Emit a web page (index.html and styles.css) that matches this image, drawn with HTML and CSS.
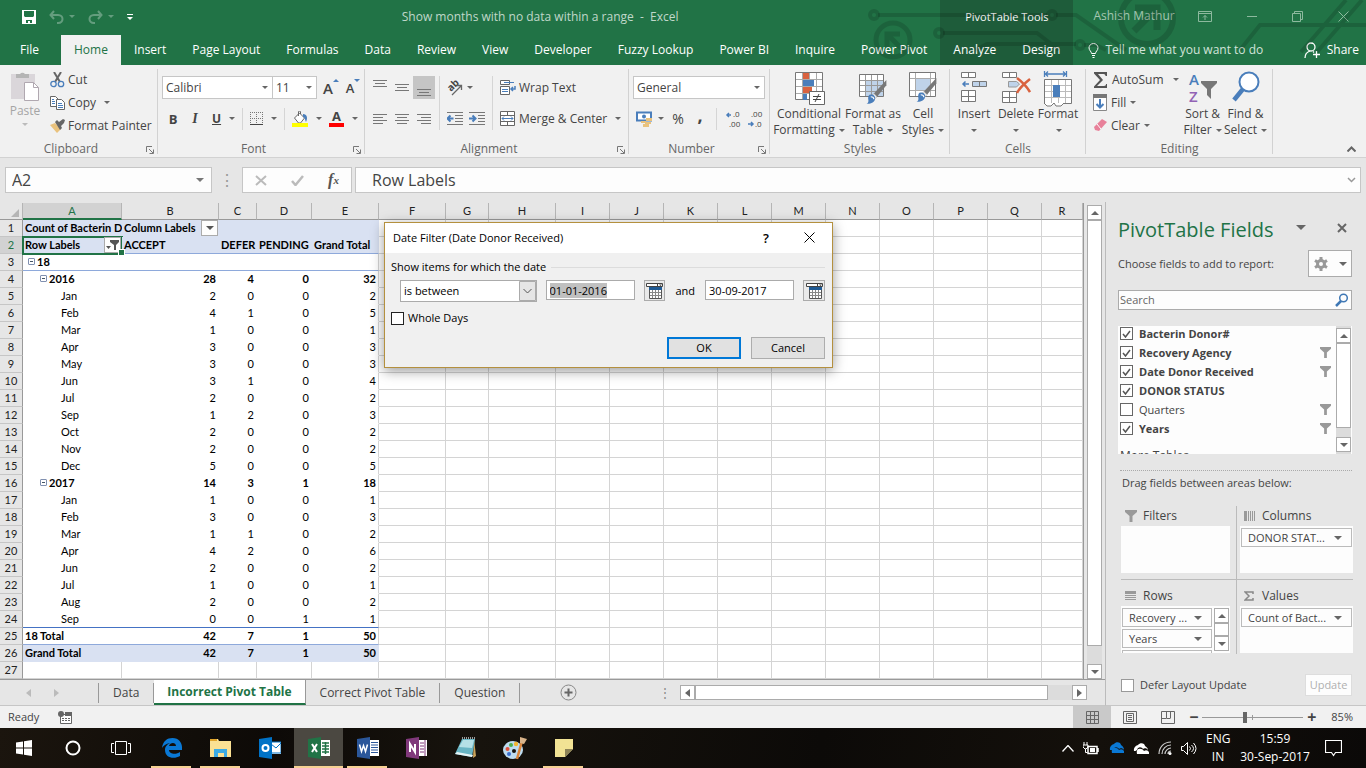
FILE: index.html
```html
<!DOCTYPE html>
<html lang="en">
<head>
<meta charset="utf-8">
<meta name="viewport" content="width=device-width,initial-scale=1">
<title>Show months with no data within a range - Excel</title>
<link rel="stylesheet" href="styles.css">
</head>
<body>

<!-- shared icons -->
<svg class="sprite" aria-hidden="true">
  <symbol id="i-launch" viewBox="0 0 8 8"><path d="M.5 6V.5H6M3 3l4 4M7.500 3.500v4h-4" fill="none" stroke="#777"/></symbol>
  <symbol id="i-funnel" viewBox="0 0 12 12"><path d="M0 0h12v2L7.500 6v6h-3V6L0 2z"/></symbol>
  <symbol id="i-up" viewBox="0 0 8 4"><path d="M0 4l4-4 4 4z"/></symbol>
  <symbol id="i-down" viewBox="0 0 8 4"><path d="M0 0h8L4 4z"/></symbol>
  <symbol id="i-cal" viewBox="0 0 17 16">
    <path d="M.5.5h16v3H.5z" fill="#fff" stroke="#444"/><path d="M11 1h1v2h-1zM13 1.500h3l-1.500 1.500z" fill="#444"/>
    <path d="M3.500 4.500h12v11h-12z" fill="#fff" stroke="#555"/><path d="M3 4h13v3H3z" fill="#1f5a94"/>
    <path d="M6.500 7v8M9.500 7v8M12.500 7v8M4 9.500h11M4 12.500h11" stroke="#888"/>
  </symbol>
  <symbol id="i-brush" viewBox="0 0 20 24">
    <path d="M19 0v5L10 16l-3-3z" fill="#777"/><path d="M7 13l3 3-2 2-3-3z" fill="#eee" stroke="#999" stroke-width=".5"/>
    <path d="M4 14c3 0 5 2 4 5-1 3-5 4-8 4 2-1 2-3 1.500-5C1.500 16 2 14 4 14z" fill="#4a7ebb"/><path d="M4 16c2 0 3 1 3 2.500" fill="none" stroke="#fff"/>
  </symbol>
</svg>

<!-- TITLE BAR + TABS -->
<header class="top">
  <svg class="circuit" viewBox="0 0 526 65" aria-hidden="true">
    <g fill="none" stroke="#000" stroke-opacity=".14" stroke-width="4">
      <circle cx="34" cy="15" r="4"/><path d="M38 15h169M216 15h20l50 35"/><circle cx="212" cy="15" r="4"/>
      <circle cx="53" cy="40" r="17" stroke-width="5"/><path d="M60 34H47v13M47 34l16 16" stroke-width="5"/>
      <circle cx="99" cy="33" r="4"/><path d="M103 33h94l22 17M135 50l12-6h89"/><circle cx="240" cy="45" r="4"/><path d="M244 45h12l10 5"/>
      <circle cx="307" cy="18" r="26" stroke-width="6"/><path d="M295 8h22v22M317 8l-23 23" stroke-width="7"/>
      <path d="M526 25H420l-20 25M506 0l-45 52M522 0l-45 52"/>
    </g>
  </svg>

  <div class="titlebar">
    <div class="qat">
      <button aria-label="Save"><svg width="14" height="14"><path d="M0 0h14v14H0zM2 1v5l1 1h8l1-1V1zM4 10v3h2v-2h2v2h2v-3z" fill="#fff" fill-rule="evenodd"/></svg></button>
      <button class="dim" aria-label="Undo"><svg width="15" height="14"><path d="M5 1L1.500 5 5 9M2 5h7c6 0 6 8 0 8H8" fill="none" stroke="#fff" stroke-width="2"/></svg><i class="caret"></i></button>
      <button class="dim" aria-label="Redo"><svg width="15" height="14"><path d="M10 1l3.500 4L10 9M13 5H6c-6 0-6 8 0 8h1" fill="none" stroke="#fff" stroke-width="2"/></svg><i class="caret"></i></button>
      <button aria-label="Customize Quick Access Toolbar"><svg width="6" height="6"><path d="M0 0h6v1H0zM0 3h6L3 6z" fill="#fff"/></svg></button>
    </div>
    <div class="doc-title">Show months with no data within a range &nbsp;-&nbsp; Excel</div>
  </div>
  <div class="context-title">PivotTable Tools</div>
  <div class="user">
    <span>Ashish Mathur</span>
    <div class="winbtns">
      <button aria-label="Ribbon Display Options"><svg width="14" height="11"><path d="M.5.5h13v10H.5zM1 2.500h12M7 9V4.500M5 6.500l2-2 2 2" fill="none" stroke="#8db99e"/></svg></button>
      <button aria-label="Minimize"><svg width="10" height="11"><path d="M0 5.500h10" stroke="#8db99e"/></svg></button>
      <button aria-label="Restore"><svg width="11" height="11"><path d="M.5 2.500h8v8h-8zM2.500 2V.5h8v8H9" fill="none" stroke="#8db99e"/></svg></button>
      <button aria-label="Close"><svg width="11" height="11"><path d="M.5.5l10 10M10.500.5l-10 10" stroke="#8db99e"/></svg></button>
    </div>
  </div>

  <nav class="tabs">
    <a href="#" class="file">File</a><a href="#" class="on">Home</a><a href="#">Insert</a><a href="#">Page Layout</a><a href="#">Formulas</a><a href="#">Data</a><a href="#">Review</a><a href="#">View</a><a href="#">Developer</a><a href="#">Fuzzy Lookup</a><a href="#">Power BI</a><a href="#">Inquire</a><a href="#">Power Pivot</a>
  </nav>
  <nav class="tabs context"><a href="#">Analyze</a><a href="#">Design</a></nav>
  <div class="tell">
    <button><svg width="11" height="15"><path d="M3.500 10.500C3.500 8.500 1 7.500 1 4.800a4.500 4.300 0 0 1 9 0c0 2.700-2.500 3.700-2.500 5.700zM4 12.500h3M4.500 14.500h2" fill="none" stroke="#fff"/></svg>Tell me what you want to do</button>
    <button class="share"><svg width="17" height="17"><circle cx="7" cy="5" r="4" fill="none" stroke="#fff" stroke-width="1.300"/><path d="M1 16c0-4 2-6 5-7M9 9.500l1 1M12.500 9v7M9 12.500h7" fill="none" stroke="#fff" stroke-width="1.300"/></svg>Share</button>
  </div>
</header>

<!-- RIBBON -->
<section class="ribbon">
  <div class="group g-clip">
    <div class="tools">
      <button class="paste"><svg width="30" height="32">
        <path d="M1 3h24v25H1z" fill="#dad6da"/><path d="M6 7V3h4a3 3 0 0 1 5 0h4v4z" fill="#b5b5b5"/>
        <path d="M14.500 11.500h9l5 5v13h-14z" fill="#fff" stroke="#b0a8b0"/><path d="M23.500 11.500v5h5" fill="none" stroke="#b0a8b0"/></svg>Paste<i class="caret"></i></button>
      <div class="stack">
        <button><svg width="15" height="16"><path d="M4 0l6 10M11 0L5 10" stroke="#666" stroke-width="2"/><circle cx="3.500" cy="12" r="2.700" fill="none" stroke="#4a7ebb" stroke-width="1.300"/><circle cx="11" cy="12" r="2.700" fill="none" stroke="#4a7ebb" stroke-width="1.300"/></svg>Cut</button>
        <button><svg width="15" height="14"><path d="M.5.5h5l3 3v7h-8z" fill="#fff" stroke="#666"/><path d="M6.500 3.500h5l3 3v7h-8z" fill="#fff" stroke="#666"/><path d="M2 3.500h2M2 5.500h3M2 7.500h3M8 7.500h4M8 9.500h5M8 11.500h5" stroke="#4a7ebb"/></svg>Copy<i class="caret wide"></i></button>
        <button><svg width="15" height="14"><path d="M0 6l5-2 6 6-4 4z" fill="#e9c27d"/><path d="M5 3l2-2 2 2 4-3 2 1-1 3-3 3 1 2-2 2z" fill="#666"/></svg>Format Painter</button>
      </div>
    </div>
    <div class="label">Clipboard<button aria-label="Clipboard settings"><svg><use href="#i-launch"/></svg></button></div>
  </div>

  <div class="group g-font">
    <div class="tools rows">
      <div class="row">
        <select class="combo font" aria-label="Font"><option>Calibri</option></select>
        <select class="combo size" aria-label="Font size"><option>11</option></select>
        <button class="sq grow" aria-label="Increase font size"><b>A</b><svg width="6" height="3" fill="#4a7ebb"><use href="#i-up"/></svg></button>
        <button class="sq shrink" aria-label="Decrease font size"><b>A</b><svg width="6" height="3" fill="#4a7ebb"><use href="#i-down"/></svg></button>
      </div>
      <div class="row">
        <button class="sq"><b>B</b></button><button class="sq"><i class="ital">I</i></button>
        <button class="sq under"><u>U</u><i class="caret"></i></button>
        <span class="sep"></span>
        <button class="sq" aria-label="Borders"><svg width="13" height="13"><path d="M.5 0v12M6.500 0v12M12.500 0v12M0 .5h13M0 6.500h13" stroke="#777" stroke-dasharray="1 1"/><path d="M0 12.500h13" stroke="#444"/></svg><i class="caret"></i></button>
        <span class="sep"></span>
        <button class="sq" aria-label="Fill colour"><svg width="16" height="16"><path d="M2.500 7l5-5 5 5-4 5h-2z" fill="#fff" stroke="#666"/><path d="M6.500 5V1a1 1 0 0 1 2 0v2" fill="none" stroke="#666"/><path d="M11 3c4 0 5 4 3 8-1-2-1-5-3-5z" fill="#4a7ebb"/><path d="M0 12h16v4H0z" fill="#ff0"/></svg><i class="caret"></i></button>
        <button class="sq fontcol" aria-label="Font colour"><b>A</b><i class="caret"></i></button>
      </div>
    </div>
    <div class="label">Font<button aria-label="Font settings"><svg><use href="#i-launch"/></svg></button></div>
  </div>

  <div class="group g-align">
    <div class="tools">
      <div class="pair">
        <div class="row">
          <button class="sq" aria-label="Top align"><svg class="ln"><path d="M0 1.500h14M2 4.500h10M0 7.500h14"/></svg></button>
          <button class="sq" aria-label="Middle align"><svg class="ln"><path d="M0 5.500h14M2 8.500h10M0 11.500h14"/></svg></button>
          <button class="sq on" aria-label="Bottom align"><svg class="ln"><path d="M0 10.500h14M2 13.500h10M0 16.500h14"/></svg></button>
        </div>
        <div class="row">
          <button class="sq" aria-label="Align left"><svg class="ln"><path d="M0 4.500h14M0 7.500h10M0 10.500h14M0 13.500h10"/></svg></button>
          <button class="sq" aria-label="Center"><svg class="ln"><path d="M0 4.500h14M2 7.500h10M0 10.500h14M2 13.500h10"/></svg></button>
          <button class="sq" aria-label="Align right"><svg class="ln"><path d="M0 4.500h14M4 7.500h10M0 10.500h14M4 13.500h10"/></svg></button>
        </div>
      </div>
      <span class="sep tall"></span>
      <div class="pair">
        <div class="row"><button class="sq" aria-label="Orientation"><svg class="orient" width="17" height="16"><text transform="translate(5 12) rotate(-45)">ab</text><path d="M6 15l9-9M11 5.500h4.500V10" fill="none" stroke="#666" stroke-width="1.300"/></svg><i class="caret"></i></button></div>
        <div class="row">
          <button class="sq" aria-label="Decrease indent"><svg width="16" height="14"><path d="M0 .5h16M8 3.500h8M8 6.500h8M8 9.500h8M0 12.500h16" stroke="#777"/><path d="M6.500 6.500H1M3.500 3.500l-3 3 3 3" fill="none" stroke="#4a7ebb" stroke-width="2"/></svg></button>
          <button class="sq" aria-label="Increase indent"><svg width="16" height="14"><path d="M0 .5h16M9 3.500h7M9 6.500h7M9 9.500h7M0 12.500h16" stroke="#777"/><path d="M0 6.500h5.500M3.500 3.500l3 3-3 3" fill="none" stroke="#4a7ebb" stroke-width="2"/></svg></button>
        </div>
      </div>
      <span class="sep tall"></span>
      <div class="pair">
        <div class="row"><button class="txt"><svg width="16" height="15"><path d="M.5.5h9v4h-9zM.5 6.500h9v8h-9z" fill="#fff" stroke="#666"/><path d="M4 2.500h10M2 9.500h6M2 11.500h6" stroke="#4a7ebb"/><path d="M15 6v3h-4M13 7l-2 2 2 2" fill="none" stroke="#4a7ebb" stroke-width="1.500"/></svg>Wrap Text</button></div>
        <div class="row"><button class="txt"><svg width="16" height="15"><path d="M.5.5h14v14H.5zM.5 4.500h14M.5 10.500h14M7.500 1v3M7.500 11v3" fill="#fff" stroke="#666"/><path d="M2 7.500h11M4 5.500l-2 2 2 2M11 5.500l2 2-2 2" fill="none" stroke="#4a7ebb"/></svg>Merge &amp; Center<i class="caret wide"></i></button></div>
      </div>
    </div>
    <div class="label">Alignment<button aria-label="Alignment settings"><svg><use href="#i-launch"/></svg></button></div>
  </div>

  <div class="group g-num">
    <div class="tools rows">
      <div class="row"><select class="combo numfmt" aria-label="Number format"><option>General</option></select></div>
      <div class="row spread">
        <button class="sq money" aria-label="Accounting format"><svg width="16" height="16"><path d="M1 1.500h14v8H1z" fill="#fff" stroke="#4a7ebb" stroke-width="2"/><circle cx="8" cy="5.500" r="2" fill="#4a7ebb"/><path d="M10 7h6v3h-6zM9 11h6v2H9zM5 10h5v2H5zM7 13h6v3H7z" fill="#e9c27d"/></svg><i class="caret"></i></button>
        <button class="sq pct">%</button><button class="sq comma"><b>,</b></button>
        <span class="sep"></span>
        <button class="sq" aria-label="Increase decimal"><svg width="17" height="20"><path d="M6 6H2M4 4L2 6l2 2" fill="none" stroke="#4a7ebb" stroke-width="1.500"/><text x="8" y="8">.0</text><text x="4" y="18">.00</text></svg></button>
        <button class="sq" aria-label="Decrease decimal"><svg width="17" height="20"><text x="4" y="8">.00</text><path d="M1 15h5M4 13l2 2-2 2" fill="none" stroke="#4a7ebb" stroke-width="1.500"/><text x="8" y="18">.0</text></svg></button>
      </div>
    </div>
    <div class="label">Number<button aria-label="Number settings"><svg><use href="#i-launch"/></svg></button></div>
  </div>

  <div class="group g-styles">
    <div class="tools">
      <button class="big w74"><svg width="32" height="34"><path d="M2.500 1.500h27v27h-27z" fill="#fff" stroke="#777"/><path d="M9.500 2v26M16.500 2v26M23.500 2v26M3 8.500h26M3 15.500h26M3 22.500h26" stroke="#aaa"/><path d="M10 2h6v6h-6zM10 16h9v6h-9z" fill="#d9623f"/><path d="M10 9h11v6H10zM10 23h4v6h-4z" fill="#4a7ebb"/><path d="M16.500 20.500h15v13h-15z" fill="#fff" stroke="#666"/><path d="M20 25.500h8M20 28.500h8M26 23l-4 8" stroke="#444"/></svg><span>Conditional<br>Formatting <i class="caret"></i></span></button>
      <button class="big w54"><svg width="32" height="34"><path d="M2.500 3.500h24v22h-24z" fill="#fff" stroke="#777"/><path d="M8 9h18v16H8z" fill="#bfd3ea"/><path d="M8.500 4v21M14.500 4v21M20.500 4v21M3 9.500h23M3 14.500h23M3 20.500h23" stroke="#999"/><use href="#i-brush" x="9" y="9" width="22" height="25"/></svg><span>Format as<br>Table <i class="caret"></i></span></button>
      <button class="big w46"><svg width="32" height="34"><path d="M2.500 1.500h26v24h-26z" fill="#fff" stroke="#777"/><path d="M8.500 2v23M23.500 2v23M3 7.500h25M3 19.500h25" stroke="#aaa"/><path d="M9 8h14v11H9z" fill="#bfd3ea"/><use href="#i-brush" x="9" y="7" width="22" height="25"/></svg><span>Cell<br>Styles <i class="caret"></i></span></button>
    </div>
    <div class="label">Styles</div>
  </div>

  <div class="group g-cells">
    <div class="tools">
      <button class="big w42"><svg width="28" height="34"><path d="M1.500 1.500h14v5h-14zM8.500 1.500v5M1.500 19.500h14v11h-14zM8.500 19.500v11M1.500 25.500h14" fill="#fff" stroke="#777"/><path d="M12.500 10.500h14v5h-14zM19.500 10.500v5" fill="#bfd3ea" stroke="#777"/><path d="M9 13H3M5.500 10.500L3 13l2.500 2.500" fill="none" stroke="#4a7ebb" stroke-width="1.500"/></svg><span>Insert<br><i class="caret"></i></span></button>
      <button class="big w42"><svg width="30" height="34"><path d="M1.500 1.500h14v5h-14zM8.500 1.500v5M1.500 20.500h14v11h-14zM8.500 20.500v11M1.500 26.500h14" fill="#fff" stroke="#777"/><path d="M7.500 10.500h8l3 2.500-3 3h-8z" fill="#bfd3ea" stroke="#999"/><path d="M16 7c4 3 10 9 13 14M29 8c-5 4-10 8-13 14" fill="none" stroke="#d9623f" stroke-width="2.500"/></svg><span>Delete<br><i class="caret"></i></span></button>
      <button class="big w42"><svg width="30" height="36"><path d="M1.500 0v6M23.500 0v6M2 3h21M5 .5L2.500 3 5 5.500M20 .5L22.500 3 20 5.500" fill="none" stroke="#4a7ebb" stroke-width="1.300"/><path d="M1.500 8.500h27v24h-27z" fill="#fff" stroke="#777"/><path d="M8.500 9v23M15.500 9v23M22.500 9v23M2 14.500h26M2 20.500h26M2 26.500h26" stroke="#bbb"/><path d="M10 14h7v12h-7z" fill="#4a7ebb"/><path d="M1 32l3 3h4l3-3 2 3h5l3-3" fill="#fff" stroke="#777"/></svg><span>Format<br><i class="caret"></i></span></button>
    </div>
    <div class="label">Cells</div>
  </div>

  <div class="group g-edit">
    <div class="tools">
      <div class="stack">
        <button><svg width="15" height="16"><path d="M1 0h13v4h-1.500c0-1-.5-2-2-2H5l5 6-6 6h7c1.500 0 2-1 2-2H14v4H1v-1.500L7 8 1 1.500z" fill="#555"/></svg>AutoSum<i class="caret wide"></i></button>
        <button><svg width="14" height="17"><path d="M.5.5h13v16H.5z" fill="#fff" stroke="#888"/><path d="M0 0h14v4H0z" fill="#777"/><path d="M7 5v8M3.500 10L7 13.500l3.500-3.500" fill="none" stroke="#4a7ebb" stroke-width="2"/></svg>Fill<i class="caret"></i></button>
        <button><svg width="14" height="15"><path d="M1 9l8-8 5 3-8 9-4-1z" fill="#e8819a"/><path d="M4 6l4 5" stroke="#fff"/></svg>Clear<i class="caret"></i></button>
      </div>
      <button class="big w43"><svg class="az" width="30" height="36"><text x="1" y="14" fill="#4a7ebb">A</text><text x="1" y="31" fill="#9263b5">Z</text><path d="M13 10h16v2l-6 6v10l-4-4v-6l-6-6z" fill="#777"/></svg><span>Sort &amp;<br>Filter <i class="caret"></i></span></button>
      <button class="big w43"><svg width="30" height="34"><path d="M12 18L3 29" stroke="#4a7ebb" stroke-width="4.500"/><circle cx="18" cy="11" r="9.500" fill="#fff" stroke="#4a7ebb" stroke-width="2"/></svg><span>Find &amp;<br>Select <i class="caret"></i></span></button>
    </div>
    <div class="label">Editing</div>
  </div>
  <button class="collapse" aria-label="Collapse the ribbon"><svg width="9" height="6"><path d="M.5 5.500l4-4 4 4" fill="none" stroke="#666" stroke-width="2"/></svg></button>
</section>

<!-- FORMULA BAR -->
<section class="formula">
  <div class="namebox"><input aria-label="Name Box" value="A2"><button aria-label="Names"><svg width="8" height="4" fill="#777"><use href="#i-down"/></svg></button></div>
  <span class="dots">⋮</span>
  <div class="fx">
    <button aria-label="Cancel entry"><svg width="12" height="11"><path d="M1 1l10 9M11 1L1 10" stroke="#bbb" stroke-width="2"/></svg></button>
    <button aria-label="Enter"><svg width="13" height="11"><path d="M1 6l3.500 4L12 1" fill="none" stroke="#bbb" stroke-width="2.500"/></svg></button>
    <button aria-label="Insert function" class="fxi">f<small>x</small></button>
  </div>
  <div class="entry"><input aria-label="Formula Bar" value="Row Labels"><button aria-label="Expand"><svg width="9" height="6"><path d="M1 1l3.500 3.500L8 1" fill="none" stroke="#999" stroke-width="1.500"/></svg></button></div>
</section>

<!-- SHEET + FIELD LIST -->
<main>
  <div class="book">
    <div class="view">
      <div class="grid"><table id="sheet"></table></div>
      <div class="vscroll">
        <button aria-label="Scroll up"><svg width="8" height="4"><use href="#i-up"/></svg></button>
        <div class="thumb"></div>
        <button aria-label="Scroll down"><svg width="8" height="4"><use href="#i-down"/></svg></button>
      </div>
    </div>
    <div class="sheettabs">
      <div class="arrows"><button aria-label="Previous sheet"><svg width="5" height="8"><path d="M5 0v8L0 4z"/></svg></button><button aria-label="Next sheet"><svg width="5" height="8"><path d="M0 0v8l5-4z"/></svg></button></div>
      <a href="#">Data</a><a href="#" class="on">Incorrect Pivot Table</a><a href="#">Correct Pivot Table</a><a href="#">Question</a>
      <button class="add" aria-label="New sheet"><svg width="17" height="17"><circle cx="8.500" cy="8.500" r="7.500" fill="none" stroke="#888"/><path d="M8.500 4.500v8M4.500 8.500h8" stroke="#666" stroke-width="2"/></svg></button>
      <span class="dots">⋮</span>
      <div class="hscroll">
        <button aria-label="Scroll left"><svg width="5" height="8"><path d="M5 0v8L0 4z"/></svg></button>
        <div class="thumb"></div>
        <button aria-label="Scroll right"><svg width="5" height="8"><path d="M0 0v8l5-4z"/></svg></button>
      </div>
    </div>
  </div>

  <aside class="pane">
    <div class="pane-head"><h2>PivotTable Fields</h2>
      <button aria-label="Pane options"><svg width="10" height="5" fill="#666"><path d="M0 0h10L5 5z"/></svg></button>
      <button aria-label="Close pane"><svg width="10" height="10"><path d="M1 1l8 8M9 1L1 9" stroke="#666" stroke-width="2"/></svg></button></div>
    <div class="choose"><span>Choose fields to add to report:</span>
      <button aria-label="Tools"><svg width="14" height="14"><circle cx="7" cy="7" r="3.500" fill="none" stroke="#999" stroke-width="3"/><path d="M7 0v3M7 11v3M1 3.500l2.500 1.500M13 3.500L10.500 5M1 10.500L3.500 9M13 10.500L10.500 9" stroke="#999" stroke-width="3"/></svg><svg width="8" height="4" fill="#666"><use href="#i-down"/></svg></button></div>
    <div class="search"><input aria-label="Search" placeholder="Search"><svg width="14" height="14"><circle cx="8.500" cy="5" r="3.800" fill="none" stroke="#3f78b5" stroke-width="1.500"/><path d="M6 8l-5 5" stroke="#3f78b5" stroke-width="2.500"/></svg></div>
    <div class="fields">
      <div class="list">
        <label class="sel"><input type="checkbox" checked>Bacterin Donor#</label>
        <label class="sel"><input type="checkbox" checked>Recovery Agency<svg><use href="#i-funnel"/></svg></label>
        <label class="sel"><input type="checkbox" checked>Date Donor Received<svg><use href="#i-funnel"/></svg></label>
        <label class="sel"><input type="checkbox" checked>DONOR STATUS</label>
        <label><input type="checkbox">Quarters<svg><use href="#i-funnel"/></svg></label>
        <label class="sel"><input type="checkbox" checked>Years<svg><use href="#i-funnel"/></svg></label>
        <a href="#" class="more">More Tables...</a>
      </div>
      <div class="vscroll">
        <button aria-label="Scroll up"><svg width="8" height="4"><use href="#i-up"/></svg></button>
        <div class="thumb"></div>
        <button aria-label="Scroll down"><svg width="8" height="4"><use href="#i-down"/></svg></button>
      </div>
    </div>
    <p class="drag">Drag fields between areas below:</p>
    <div class="areas">
      <div class="area"><h3><svg width="12" height="12" fill="#999"><use href="#i-funnel"/></svg>Filters</h3><div class="box"></div></div>
      <div class="area"><h3><svg width="12" height="10"><path d="M0 0h3v10H0zM4 0h1v10H4zM6 0h1v10H6zM8 0h1v10H8zM10 0h1v10h-1z" fill="#999"/></svg>Columns</h3>
        <div class="box"><div class="items"><button>DONOR STAT...<svg width="8" height="4"><use href="#i-down"/></svg></button></div></div></div>
      <div class="area"><h3><svg width="12" height="10"><path d="M0 0h11v3H0zM0 4h11v1H0zM0 6h11v1H0zM0 8h11v1H0z" fill="#999"/></svg>Rows</h3>
        <div class="box"><div class="items"><button>Recovery ...<svg width="8" height="4"><use href="#i-down"/></svg></button><button>Years<svg width="8" height="4"><use href="#i-down"/></svg></button><button></button></div>
          <div class="vscroll"><button aria-label="Scroll up"><svg width="8" height="4"><use href="#i-up"/></svg></button><div class="thumb"></div><button aria-label="Scroll down"><svg width="8" height="4"><use href="#i-down"/></svg></button></div></div></div>
      <div class="area"><h3><svg width="10" height="10"><path d="M9 3V1H1l4 4-4 4h8V7" fill="none" stroke="#888" stroke-width="1.500"/></svg>Values</h3>
        <div class="box"><div class="items"><button>Count of Bact...<svg width="8" height="4"><use href="#i-down"/></svg></button></div></div></div>
    </div>
    <div class="defer"><label><input type="checkbox">Defer Layout Update</label><button disabled>Update</button></div>
  </aside>
</main>

<!-- STATUS BAR -->
<footer class="status">
  <span>Ready</span>
  <svg width="14" height="13"><path d="M2.500 3.500h11v9h-11z" fill="#fff" stroke="#666"/><path d="M7 1h7v4H7z" fill="#666"/><circle cx="3" cy="3" r="3" fill="#666"/><path d="M4 7.500h8M4 9.500h8" stroke="#666" stroke-dasharray="2 1"/></svg>
  <div class="views">
    <button class="on" aria-label="Normal"><svg width="13" height="13"><path d="M.5.5h12v12H.5zM4.500 0v13M8.500 0v13M0 4.500h13M0 8.500h13" fill="none" stroke="#666"/></svg></button>
    <button aria-label="Page Layout"><svg width="14" height="13"><path d="M.5.5h13v12H.5zM3.500 2.500h7v8h-7zM5 4.500h4M5 6.500h4M5 8.500h4" fill="none" stroke="#666"/></svg></button>
    <button aria-label="Page Break Preview"><svg width="14" height="13"><path d="M.5.5h13v12H.5zM5.500 1v6M9.500 1v6M5.500 7.500h4M.5 7.500h5" fill="none" stroke="#666"/></svg></button>
  </div>
  <div class="zoom"><button aria-label="Zoom out">−</button><input type="range" min="10" max="400" value="174" aria-label="Zoom"><button aria-label="Zoom in">+</button></div>
  <span class="pc">85%</span>
</footer>

<!-- WINDOWS TASKBAR -->
<footer class="taskbar">
  <button aria-label="Start"><svg width="17" height="16" fill="#fff"><path d="M0 2.500L7 1.500V7.500H0zM8 1.300L16 0v7.500H8zM0 8.500h7v6l-7-1zM8 8.500h8V16l-8-1.300z"/></svg></button>
  <button aria-label="Cortana"><svg width="18" height="16"><circle cx="8" cy="8" r="6.500" fill="none" stroke="#fff" stroke-width="2"/></svg></button>
  <button aria-label="Task View"><svg width="24" height="14"><path d="M4.500.5h11v13h-11zM3 2.500H.5v9H3M17 2.500h2.500v9H17" fill="none" stroke="#fff"/></svg></button>
  <button class="run" aria-label="Edge"><svg width="20" height="20"><path d="M0 10C1 3 5 0 10.500 0 17 0 20 5 20 9v3H7c0 4 7 5 11 2v4c-6 3.500-15 2-15-6 0-4 3-6 5-7-4 .5-7 3-8 5zM7 8h7c0-4-6-4-7 0z" fill="#0a78d4" fill-rule="evenodd"/></svg></button>
  <button class="run" aria-label="File Explorer"><svg width="21" height="18"><path d="M0 0h8l1 2h12v16H0z" fill="#fbe193"/><path d="M0 0h7v2H0z" fill="#e0a52c"/><path d="M4 18v-8h13v8h-3v-4H8v4z" fill="#3cabe4"/></svg></button>
  <button aria-label="Outlook"><svg width="22" height="22"><path d="M12 5h10v12H12z" fill="#fff"/><path d="M12 7l5 4 5-5M12 16V5h10v11z" fill="none" stroke="#0072c6"/><path d="M0 2l13-2v22L0 20z" fill="#0072c6"/><circle cx="6.500" cy="11" r="3" fill="none" stroke="#fff" stroke-width="2"/></svg></button>
  <button class="run act" aria-label="Excel"><svg width="22" height="22"><path d="M12 3h10v16H12z" fill="#fff"/><path d="M14 6h7M14 9h7M14 12h7M14 15h7M17.500 5v12" stroke="#217346" stroke-width="1.500"/><path d="M0 2l13-2v22L0 20z" fill="#217346"/><path d="M4 7l5 8M9 7l-5 8" stroke="#fff" stroke-width="2"/></svg></button>
  <button class="run" aria-label="Word"><svg width="22" height="22"><path d="M12 3h10v16H12z" fill="#fff"/><path d="M14 5.500h7M14 8h7M14 10.500h7M14 13h7M14 15.500h7" stroke="#2b579a"/><path d="M0 2l13-2v22L0 20z" fill="#2b579a"/><path d="M2.500 7.500l2 7 2-6 2 6 2-7" fill="none" stroke="#fff" stroke-width="1.500"/></svg></button>
  <button aria-label="OneNote"><svg width="22" height="22"><path d="M12 3h9v16h-9z" fill="#fff"/><path d="M14 6h4M14 9h4M14 12h4M14 15h4M19 3v16" stroke="#80397b"/><path d="M0 2l13-2v22L0 20z" fill="#80397b"/><path d="M4 15V7l5 8V7" fill="none" stroke="#fff" stroke-width="2"/></svg></button>
  <button aria-label="Notepad"><svg width="22" height="22"><path d="M19 2l2 17-3 2z" fill="#c9a25a"/><path d="M7 2h13l-3 18-17-3z" fill="#69b5c4"/><path d="M8 3h11l-2 8-13-1z" fill="#b5e0e6"/><path d="M0 17l17 3 1-2-16-3z" fill="#e8f4f6"/><path d="M7 1h13" stroke="#999" stroke-dasharray="1 1" stroke-width="2"/></svg></button>
  <button aria-label="Paint"><svg width="24" height="23"><ellipse cx="10" cy="13" rx="10" ry="9" fill="#bddcf0"/><circle cx="11" cy="14" r="2" fill="#14110c"/><circle cx="4.500" cy="12" r="2" fill="#e04f3a"/><circle cx="8" cy="8" r="2" fill="#4cae4f"/><circle cx="13" cy="7" r="2.200" fill="#f2b632"/><circle cx="6" cy="17" r="2" fill="#3a6fd0"/><path d="M19 4l-5 18" stroke="#d9853b" stroke-width="2.500"/><path d="M17 0l7 2-3 5-4-1z" fill="#d9b48a"/></svg></button>
  <button class="run" aria-label="Sticky Notes"><svg width="18" height="18"><path d="M0 0h18v10l-8 8H0z" fill="#f2e394"/><path d="M10 10h8l-8 8z" fill="#8c8256"/></svg></button>

  <div class="tray">
    <svg width="12" height="7"><path d="M.5 6.500l5.500-6 5.500 6" fill="none" stroke="#fff" stroke-width="1.300"/></svg>
    <svg width="16" height="13"><path d="M5 4.500h9v7H5zM15 6v4" fill="none" stroke="#fff" stroke-width="1.500"/><path d="M7 6h5v4H7z" fill="#fff"/><path d="M1 0v3M4 0v3M0 3h5v2L3 7H2L0 5zM2.500 7v3.500h2" fill="none" stroke="#fff"/></svg>
    <svg width="16" height="12" fill="#0a78d4"><path d="M2 8a5 5 0 0 1 4-6c2-3 7-2 7 1 2 1 3 3 3 5-1-2-4-2-5-1-1-2-5-3-6 1-1 0-2 0-3 0z"/><path d="M4 11c-1-4 1-6 4-5 2 0 2 1 3 2 3-2 6 1 5 3z"/></svg>
    <svg width="16" height="12" fill="#fff"><path d="M1 9a5 5 0 0 1 4-6c2-3 7-2 7 1 2 1 3 3 3 4-1-2-4-2-5-1-1-2-5-3-6 1-1 1-2 1-3 1z"/><path d="M4 12c-1-4 1-6 4-5 2 0 2 1 3 2 3-2 6 1 5 3z"/></svg>
    <svg width="14" height="14"><path d="M1 13C1 6 6 1 13 1M4 13c0-5 4-9 9-9M7 13c0-3 3-6 6-6M10 13c0-2 1-3 3-3" fill="none" stroke="#ccc" stroke-width="1.200"/><circle cx="12" cy="12.500" r="1.500" fill="#fff"/></svg>
    <svg width="16" height="13"><path d="M.5 4.500h2l4-4v12l-4-4h-2zM8.500 4.500q2 2 0 4M10.500 3q4 3.500 0 7M12.500 1q5 5.500 0 11" fill="none" stroke="#fff"/></svg>
  </div>
  <div class="lang">ENG<br>IN</div>
  <div class="clock">15:59<br>30-Sep-2017</div>
  <svg class="notif" width="17" height="17"><path d="M.5.500h16v12h-6l-2 3-2-3h-6z" fill="none" stroke="#fff" stroke-width="1.200"/></svg>
</footer>

<!-- DATE FILTER DIALOG -->
<form class="dialog" role="dialog" aria-labelledby="dlg-title">
  <div class="dlg-head"><span id="dlg-title">Date Filter (Date Donor Received)</span>
    <button type="button" aria-label="Help">?</button>
    <button type="button" aria-label="Close"><svg width="11" height="11"><path d="M.5.5l10 10M10.500.5l-10 10" stroke="#000"/></svg></button></div>
  <div class="dlg-body">
    <div class="legend">Show items for which the date</div>
    <div class="cond">
      <select class="op" aria-label="Condition"><option>is between</option></select>
      <input id="from" class="date" aria-label="From" value="01-01-2016">
      <button type="button" aria-label="Pick start date"><svg width="17" height="16"><use href="#i-cal"/></svg></button>
      <span>and</span>
      <input class="date" aria-label="To" value="30-09-2017">
      <button type="button" aria-label="Pick end date"><svg width="17" height="16"><use href="#i-cal"/></svg></button>
    </div>
    <label class="whole"><input type="checkbox">Whole Days</label>
    <div class="actions"><button type="button" class="ok">OK</button><button type="button">Cancel</button></div>
  </div>
</form>

<script src="sheet.js"></script>
</body>
</html>
```
FILE: styles.css
```css
:root{
  --green:#217346;
  --ribbon:#f1f1f1;
  --chrome:#e6e6e6;
  --line:#ababab;
  --grid:#d4d4d4;
}
*{box-sizing:border-box;margin:0;padding:0}
body{
  font:12px/16px "Open Sans","Noto Sans",sans-serif;color:#444;background:var(--chrome);
  height:100vh;display:flex;flex-direction:column;overflow:hidden;position:relative
}
button,input,select{font:inherit;color:inherit;background:none;border:0;border-radius:0;outline:0}
select,input[type=checkbox],input[type=range]{appearance:none}
button{display:flex;align-items:center;justify-content:center;white-space:nowrap}
a{color:inherit;text-decoration:none}
svg{flex:none;display:block}
.sprite{position:absolute;width:0;height:0}
.caret{flex:none;display:inline-block;border:3px solid transparent;border-top-color:#666;border-bottom:0;vertical-align:middle}

/* ---------- TITLE + TABS ---------- */
.top{
  background:var(--green);color:#fff;flex:none;position:relative;
  display:grid;grid-template-columns:auto auto 1fr;grid-template-rows:35px 30px
}
.top>*{position:relative}
.top .circuit{position:absolute;right:0;top:0;width:526px;height:65px;z-index:1;pointer-events:none}
.titlebar{display:flex;align-items:center;padding:0 0 2px 22px;min-width:0}
.qat{display:flex;align-items:center;gap:13px;width:118px}
.qat button{gap:5px}
.qat .caret{border-top-color:#fff}
.dim{opacity:.3}
.doc-title{flex:1;text-align:center;color:#c0d8ca}
.context-title{background:#1e5c3a;display:flex;align-items:center;justify-content:center;font-size:11px;padding-bottom:2px}
.user{display:flex;align-items:center;justify-content:space-between;padding:0 17px 3px 20px;color:#a5c7b2;white-space:nowrap}
.winbtns{display:flex;gap:35px}
.tabs{display:flex;color:#fff}
.tabs a{padding:7px 13px 0;white-space:nowrap}
.tabs .file{padding:7px 22px 0 20px}
.tabs .on{background:var(--ribbon);color:var(--green)}
.context{background:#1e5c3a}
.tell{display:flex;justify-content:space-between;padding:0 7px 0 15px;color:#d3e3da}
.tell button{gap:6px}
.tell .share{color:#fff}

/* ---------- RIBBON ---------- */
.ribbon{background:var(--ribbon);display:flex;flex:none;height:93px;border-bottom:1px solid #d2d2d2}
.group{position:relative;display:flex;flex-direction:column;justify-content:space-between;padding:0 4px;flex:none}
.group::after{content:"";position:absolute;right:0;top:4px;bottom:3px;border-right:1px solid #d2d2d2}
.g-clip{width:158px}.g-font{width:207px}.g-align{width:264px}.g-num{width:141px}
.g-styles{width:180px;padding:0 2px}.g-cells{width:136px;padding:0 3px}.g-edit{width:187px;padding:0 6px}
.tools{display:flex;align-items:flex-start;white-space:nowrap}
.label{position:relative;text-align:center;color:#666;line-height:16px}
.g-clip .label,.g-font .label,.g-align .label,.g-num .label{padding-right:16px}
.label button{position:absolute;right:0;top:5px}
.label svg{width:8px;height:8px}
.paste{width:42px;flex-direction:column;padding-top:6px;color:#a5a5a5}
.paste .caret{margin-top:4px;border-top-color:#bbb}
.stack{display:flex;flex-direction:column;padding-top:3px;padding-left:4px;align-items:flex-start}
.stack button{height:23px;gap:4px}
.g-clip .stack button{gap:3px}
.caret.wide{margin-left:5px}
.g-edit .stack{width:90px;padding-left:1px}
.rows,.pair{display:flex;flex-direction:column;gap:8px}
.rows{padding-top:11px}
.pair{padding-top:11px}
.row{display:flex;align-items:center;height:23px}
.combo{
  height:23px;border:1px solid #c6c6c6;padding:0 3px;
  background:#fff url("data:image/svg+xml,%3Csvg xmlns='http://www.w3.org/2000/svg' width='6' height='3'%3E%3Cpath d='M0 0h6L3 3z' fill='%23666'/%3E%3C/svg%3E") no-repeat right 4px center
}
.font{width:111px}.size{width:44px}.numfmt{width:132px}
.size{border-left:0}
.sq{min-width:22px;height:23px;padding:0 2px}
.sq b{font-size:13px}
.sq .caret{margin-left:8px}
.under{padding-left:6px}
.grow,.shrink{align-items:flex-start}
.grow{margin-left:3px}
.grow b{font-size:15px;font-weight:600;line-height:24px}
.shrink b{font-size:13px;font-weight:600;line-height:25px}
.grow svg,.shrink svg{margin-top:3px}
.ital{font:italic 700 14px "Liberation Serif",serif}
.sq u{font-weight:700}
.sq.on{background:#c5c5c5}
.fontcol{margin-left:3px}
.fontcol b{line-height:13px;border-bottom:4px solid red;padding:0 3px}
.sep{width:1px;height:22px;background:#d5d5d5;margin:0 5px}
.tall{height:54px;margin-top:11px;margin-left:4px;margin-right:4px}
.ln{width:14px;height:18px;fill:none;stroke:#777}
.orient{overflow:visible}
.sq .orient text{font-size:10px;font-weight:700}
.sq .orient+.caret{margin-left:4px}
.txt{gap:3px;padding-left:3px}
.spread .sq{padding:0}
.spread .caret{margin-left:6px}
.sq.money{margin:0 3px}
.pct,.comma{font-size:14px}
.sq.comma b{font-size:18px;line-height:10px;padding-bottom:8px}
.sq text{font-size:8px;fill:#444}
.big{flex-direction:column;padding-top:6px}
.big svg{height:36px;margin-bottom:-1px}
.big .caret{margin-left:1px}
.az{overflow:visible}
.az text{font-size:15px;font-weight:600}
.w74{width:74px}.w54{width:54px}.w46{width:46px}.w42{width:42px}.w43{width:43px}
.collapse{margin-left:auto;align-self:flex-end;padding:0 10px 5px 0}

/* ---------- FORMULA BAR ---------- */
.formula{display:flex;flex:none;align-items:center;height:44px;padding:0 5px;font-size:16px}
.formula>div{display:flex;align-items:center;background:#fdfdfd;border:1px solid #c6c6c6;height:26px}
.namebox{width:207px;padding:0 7px 0 6px}
.formula input{flex:1;min-width:0}
.dots{width:30px;text-align:center;color:#999}
.fx{width:110px;justify-content:space-around;margin-right:3px}
.fxi{font:italic 700 16px "Liberation Serif",serif;color:#555}
.fxi small{font-size:11px}
.entry{flex:1;padding:0 4px 0 16px}

/* ---------- SHEET ---------- */
main{flex:1;display:flex;min-height:0}
.book{flex:1;display:flex;flex-direction:column;min-width:0}
.view{flex:1;display:flex;min-height:0;padding-top:1px}
.grid{flex:1;overflow:hidden;border-right:1px solid #999;background:#fff}
#sheet{border-collapse:separate;border-spacing:0;table-layout:fixed;width:100%;color:#000;font:11px/16px Lato,"Open Sans",sans-serif}
#sheet th{font-weight:400;background:var(--chrome);color:#222;border-right:1px solid #b5b5b5;height:17px}
#sheet thead th{border-bottom:1px solid #999}
#sheet tbody th{border-bottom:1px solid #c6c6c6;border-right-color:#999}
#sheet th.cur{background:#d2d2d2;color:var(--green)}
#sheet thead th.cur{border-bottom:2px solid var(--green);line-height:15px}
#sheet td{height:17px;border-right:1px solid var(--grid);border-bottom:1px solid var(--grid);padding:0 2px;white-space:nowrap;position:relative}
#sheet .p td:nth-child(-n+6){border-bottom-color:transparent}
#sheet .p td:nth-child(-n+5){border-right-width:0}
#sheet .n{text-align:right}
#sheet .bold{font-weight:700}
#sheet .shade td:nth-child(-n+6){background:#d9e1f2;border-color:#d9e1f2}
#sheet .rule td:nth-child(-n+6){border-bottom-color:#8ea9db}
#sheet .rule-dark td:nth-child(-n+6){border-bottom-color:#4472c4}
#sheet .p .n{padding-right:3px}
#sheet .p td:nth-child(6){padding-right:2px}
#sheet .i1{padding-left:5px}
#sheet .i2{padding-left:17px}
#sheet .i3{padding-left:38px}
.tog{display:inline-block;width:7px;height:7px;border:1px solid #8090b0;border-radius:1px;margin-right:2px;background:linear-gradient(#456,#456) center/3px 1px no-repeat #fff;vertical-align:1px}
.cellbtn{position:absolute;right:1px;top:0;width:17px;height:16px;background:#fdfdfd;border:1px solid var(--line)}
#sheet td.active{outline:2px solid var(--green);outline-offset:-1px}
#sheet td.active::after{content:"";position:absolute;right:-3px;bottom:-3px;width:5px;height:5px;background:var(--green);border:1px solid #fff;box-sizing:content-box;z-index:1}
.corner{width:0;height:0;margin:4px 3px 0 auto;border:4px solid;border-color:transparent #b5b5b5 #b5b5b5 transparent}

.vscroll{display:flex;flex-direction:column;width:15px;background:#dcdcdc}
.vscroll button,.hscroll button{width:15px;height:15px;background:#fff;border:1px solid var(--line);fill:#666}
.vscroll .thumb,.hscroll .thumb{background:#fff;border:1px solid var(--line);flex:1}
.view .vscroll{margin:2px 3px 0}
.view .thumb{margin-bottom:18px}

.sheettabs{display:flex;align-items:center;flex:none;height:27px;border-top:1px solid #999;border-bottom:1px solid #c6c6c6}
.sheettabs a{padding:0 14px;line-height:20px;border-right:1px solid #999}
.sheettabs .on{background:#fff;color:var(--green);font-weight:700;border-bottom:2px solid var(--green);height:25px;line-height:23px;padding:0 13px;align-self:flex-start}
.arrows{display:flex;width:99px;height:20px;padding-left:26px;gap:23px;border-right:1px solid #999;fill:#bbb}
.add{margin-left:40px}
.sheettabs .dots{margin-left:auto;color:#888}
.hscroll{display:flex;width:407px;margin-right:18px;background:#dcdcdc}
.hscroll .thumb{margin-right:24px}

/* ---------- FIELD PANE ---------- */
.pane{width:261px;flex:none;border-left:1px solid #bbb;padding:15px 14px 0 12px;display:flex;flex-direction:column;border-bottom:1px solid #c6c6c6}
.pane-head{display:flex;align-items:center;padding-right:5px}
.pane-head button{padding-bottom:5px}
.pane-head button+button{margin-left:31px}
.pane h2{font-size:20px;line-height:26px;font-weight:400;color:var(--green);flex:1;white-space:nowrap}
.choose{display:flex;justify-content:space-between;align-items:center;margin-top:7px;white-space:nowrap}
.choose span{font-size:11px}
.choose button{width:44px;height:27px;border:1px solid var(--line);background:#fdfdfd;gap:11px}
.search{display:flex;align-items:center;height:20px;border:1px solid var(--line);background:#fdfdfd;margin-top:13px;padding:0 2px 0 1px}
.search input{flex:1;min-width:0;font-size:11px}
.search input::placeholder{color:#666;opacity:1}
.fields{display:flex;height:128px;margin-top:16px;background:#fdfdfd;padding-right:1px}
.list{flex:1;overflow:hidden;padding-left:2px}
.list label{display:flex;align-items:center;height:19px;font-size:11px}
.list label:first-child{margin-top:-2px}
.list label svg{margin-left:auto;margin-right:5px;width:11px;height:11px;fill:#999}
.list .sel{font-weight:700}
.list .more{display:block;margin-top:10px}
.fields .vscroll{padding-top:2px;padding-bottom:2px}
.fields .thumb{margin-bottom:9px}
input[type=checkbox]{width:13px;height:13px;border:1px solid #666;background:#fff;margin-right:6px;flex:none}
input[type=checkbox]:checked{background:#fff url("data:image/svg+xml,%3Csvg xmlns='http://www.w3.org/2000/svg' width='9' height='8'%3E%3Cpath d='M1 4l2.500 3L8 1' fill='none' stroke='%23555' stroke-width='1.500'/%3E%3C/svg%3E") no-repeat center}
.drag{border-top:1px dotted #aaa;margin:16px 0 0 2px;padding:4px 0 0 2px;font-size:11px}
.areas{display:grid;grid-template-columns:116px 1fr;margin:15px -1px 0 3px}
.area{padding:0 6px 6px 0;height:74px}
.area:nth-child(odd){border-right:1px solid #bbb}
.area:nth-child(even){padding-right:0;padding-left:3px}
.area:nth-child(-n+2){border-bottom:1px solid #bbb}
.area:nth-child(n+3){padding-bottom:0}
.area h3{display:flex;align-items:center;font-weight:400;font-size:12px;line-height:18px;height:20px;padding-left:4px}
.area h3 svg{margin-right:6px;width:12px}
.area:nth-child(n+3) h3{padding-top:6px;height:26px}
.box{display:flex;height:47px;background:#fdfdfd;padding:2px 1px 0;overflow:hidden}
.items{flex:1;display:flex;flex-direction:column;gap:2px}
.items button{height:19px;border:1px solid #bbb;justify-content:space-between;padding:0 9px 0 6px;flex:none;font-size:11px;fill:#666}
.box .vscroll{height:43px;margin-left:2px}
.defer{display:flex;align-items:center;justify-content:space-between;margin-top:20px}
.defer label{display:flex;align-items:center;padding-left:3px;font-size:11px}
.defer input{border-color:#999}
.defer button{width:47px;height:22px;background:#fdfdfd;border:1px solid #ddd;color:#b0b0b0;font-size:11px}

/* ---------- STATUS BAR ---------- */
.status{display:flex;align-items:center;flex:none;height:22px;background:var(--ribbon);padding-left:8px;font-size:11px;gap:19px}
.views{display:flex;margin-left:auto;height:22px}
.views button{width:38px}
.views .on{background:#c9c9c9}
.zoom{display:flex;align-items:center;gap:4px;margin-left:-17px}
.zoom button{font-size:16px;font-weight:700;width:9px}
.zoom input{width:101px;height:15px;background:linear-gradient(#999,#999) 0 7px/100% 1px no-repeat,linear-gradient(#999,#999) 50px 5px/1px 5px no-repeat}
.zoom input::-webkit-slider-thumb{appearance:none;width:4px;height:11px;background:#666}
.pc{margin:0 13px 0 -4px}

/* ---------- TASKBAR ---------- */
.taskbar{
  display:flex;flex:none;height:40px;color:#fff;align-items:center;
  background:linear-gradient(100deg,#1b150e,#0d0a07 20%,#17130d 35%,#0c0a08 60%,#14100b 80%,#0b0908)
}
.taskbar>button{width:49px;height:40px;position:relative}
.run::after{content:"";position:absolute;left:4px;right:5px;bottom:0;height:2px;background:#f6d193}
.act{background:#4b4841}
.act::after{left:0;right:0}
.tray{display:flex;align-items:center;gap:9px;margin-left:auto}
.lang,.clock{text-align:center;line-height:18px;white-space:nowrap}
.lang{margin-left:9px;width:24px}
.clock{margin:0 18px 0 13px;width:64px;display:flex;justify-content:center}
.notif{margin-right:24px}

/* ---------- DIALOG ---------- */
.dialog{
  position:absolute;left:384px;top:222px;width:449px;color:#000;font-size:11px;
  background:#f0f0f0;border:1px solid #b4903e;box-shadow:0 3px 12px rgba(0,0,0,.4)
}
.dlg-head{display:flex;align-items:center;height:30px;background:#fff;padding:0 17px 1px 8px;gap:35px}
.dlg-head span{flex:1}
.dlg-head button:nth-child(2){font-size:13px;font-weight:600}
.dlg-body{padding:6px 7px 8px 6px}
.legend{display:flex;align-items:center;gap:5px}
.legend::after{content:"";flex:1;height:1px;background:#dcdcdc}
.cond{display:flex;align-items:flex-start;gap:9px;margin:5px 0 0 9px}
.cond select,.date{height:20px;border:1px solid var(--line);background-color:#fff;padding:0 3px}
.cond .op{
  width:137px;height:22px;
  background:#fff url("data:image/svg+xml,%3Csvg xmlns='http://www.w3.org/2000/svg' width='17' height='20'%3E%3Cpath d='M.5.5h16v19H.5z' fill='%23e5e5e5' stroke='%23ababab'/%3E%3Cpath d='M4.500 8l4 4 4-4' fill='none' stroke='%23555'/%3E%3C/svg%3E") no-repeat right center
}
.date{width:89px}
.date::selection{background:#c0c0c0;color:#000}
.cond button{width:22px;height:21px;border:1px solid var(--line);background:#e9e9e9}
.cond span{line-height:22px;padding:0 1px}
.whole{display:flex;align-items:center;margin-top:8px}
.whole input{border-color:#222;margin-right:4px}
.actions{display:flex;justify-content:flex-end;gap:10px;margin-top:11px}
.actions button{width:74px;height:22px;border:1px solid #adadad;background:#e1e1e1}
.actions .ok{border:2px solid #0078d7}
```
FILE: sheet.js
```js
/* pivot rows: [label, accept, defer, pending, total, classes, indent] */
const rows=[
  ["Count of Bacterin D","Column Labels","","","","shade bold"],
  ["Row Labels","ACCEPT","DEFER","PENDING","Grand Total","shade bold rule"],
  ["18","","","","","bold rule","i1"],
  ["2016",28,4,0,32,"bold","i2"],
  ["Jan",2,0,0,2],["Feb",4,1,0,5],["Mar",1,0,0,1],["Apr",3,0,0,3],
  ["May",3,0,0,3],["Jun",3,1,0,4],["Jul",2,0,0,2],["Sep",1,2,0,3],
  ["Oct",2,0,0,2],["Nov",2,0,0,2],["Dec",5,0,0,5],
  ["2017",14,3,1,18,"bold","i2"],
  ["Jan",1,0,0,1],["Feb",3,0,0,3],["Mar",1,1,0,2],["Apr",4,2,0,6],
  ["Jun",2,0,0,2],["Jul",1,0,0,1],["Aug",2,0,0,2],["Sep",0,0,1,1,"rule-dark"],
  ["18 Total",42,7,1,50,"bold rule",""],
  ["Grand Total",42,7,1,50,"bold shade",""]
];
const widths=[23,99,97,38,55,67,67,43,67,54,54,54,54,54,54,54,54,54];
const letters="ABCDEFGHIJKLMNOPQR".split("");
const table=document.getElementById("sheet");

let html="<colgroup>"+widths.map(w=>`<col style="width:${w}px">`).join("")+"<col></colgroup>";
html+='<thead><tr><th><div class="corner"></div></th>'+letters.map((l,i)=>`<th${i?"":' class="cur"'}>${l}</th>`).join("")+"</tr></thead><tbody>";

for(let r=0;r<27;r++){
  const d=rows[r];
  html+=`<tr class="${d?"p "+(d[5]||""):""}"><th${r===1?' class="cur"':""}>${r+1}</th>`;
  letters.forEach((l,c)=>{
    if(!d||c>4){html+="<td></td>";return}
    let cls="",txt=d[c];
    if(c===0)cls=r<2?"":(d[6]??"i3");
    else if(typeof txt==="number")cls="n";
    if(c===0&&(cls==="i1"||cls==="i2"))txt='<i class="tog"></i>'+txt;
    if(r===0&&c===1)txt+='<button class="cellbtn" aria-label="Column filter"><svg width="8" height="4" fill="#555"><use href="#i-down"/></svg></button>';
    if(r===1&&c===0){cls="active";txt+='<button class="cellbtn" aria-label="Row filter"><svg width="13" height="10" fill="#555"><path d="M0 6h5L2.500 9zM4 0h9v2L10 5v5H8V5L4 2z"/></svg></button>'}
    html+=`<td class="${cls}">${txt}</td>`;
  });
  html+="</tr>";
}
table.innerHTML=html+"</tbody>";

/* start date is selected when the dialog opens */
const from=document.getElementById("from");
from.focus();from.select();
```
